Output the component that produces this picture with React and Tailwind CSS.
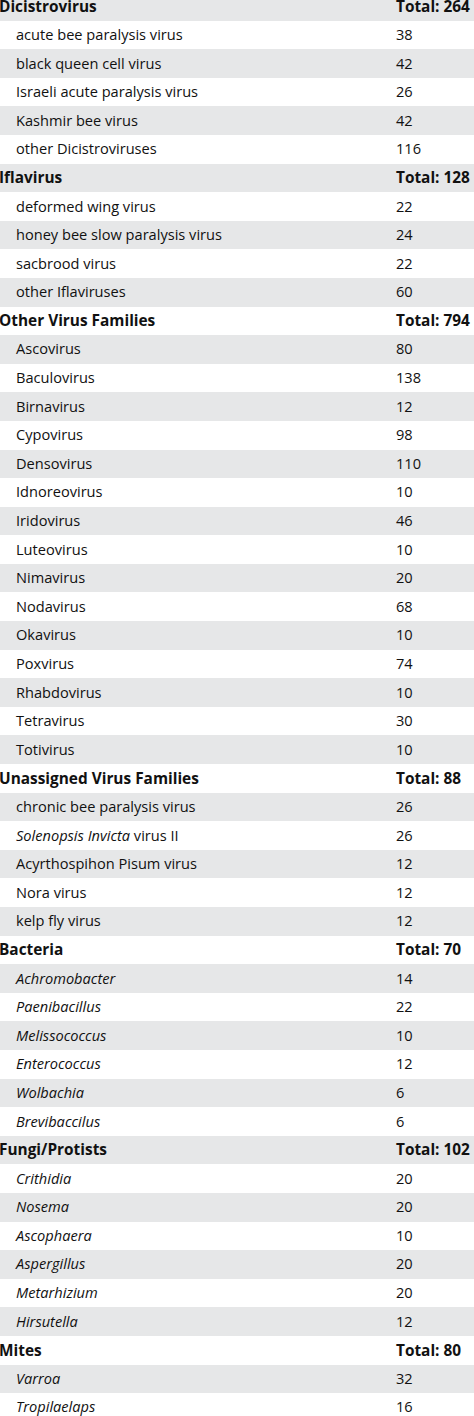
const groups = [
  {
    name: "Dicistrovirus",
    total: 264,
    items: [
      ["acute bee paralysis virus", 38],
      ["black queen cell virus", 42],
      ["Israeli acute paralysis virus", 26],
      ["Kashmir bee virus", 42],
      ["other Dicistroviruses", 116],
    ],
  },
  {
    name: "Iflavirus",
    total: 128,
    items: [
      ["deformed wing virus", 22],
      ["honey bee slow paralysis virus", 24],
      ["sacbrood virus", 22],
      ["other Iflaviruses", 60],
    ],
  },
  {
    name: "Other Virus Families",
    total: 794,
    items: [
      ["Ascovirus", 80],
      ["Baculovirus", 138],
      ["Birnavirus", 12],
      ["Cypovirus", 98],
      ["Densovirus", 110],
      ["Idnoreovirus", 10],
      ["Iridovirus", 46],
      ["Luteovirus", 10],
      ["Nimavirus", 20],
      ["Nodavirus", 68],
      ["Okavirus", 10],
      ["Poxvirus", 74],
      ["Rhabdovirus", 10],
      ["Tetravirus", 30],
      ["Totivirus", 10],
    ],
  },
  {
    name: "Unassigned Virus Families",
    total: 88,
    items: [
      ["chronic bee paralysis virus", 26],
      [
        <>
          <i>Solenopsis Invicta</i> virus II
        </>,
        26,
      ],
      ["Acyrthospihon Pisum virus", 12],
      ["Nora virus", 12],
      ["kelp fly virus", 12],
    ],
  },
  {
    name: "Bacteria",
    total: 70,
    italic: true,
    items: [
      ["Achromobacter", 14],
      ["Paenibacillus", 22],
      ["Melissococcus", 10],
      ["Enterococcus", 12],
      ["Wolbachia", 6],
      ["Brevibaccilus", 6],
    ],
  },
  {
    name: "Fungi/Protists",
    total: 102,
    italic: true,
    items: [
      ["Crithidia", 20],
      ["Nosema", 20],
      ["Ascophaera", 10],
      ["Aspergillus", 20],
      ["Metarhizium", 20],
      ["Hirsutella", 12],
    ],
  },
  {
    name: "Mites",
    total: 80,
    italic: true,
    items: [
      ["Varroa", 32],
      ["Tropilaelaps", 16],
    ],
  },
];

export default function App() {
  let rows = [];
  groups.forEach((g) => {
    rows.push({ header: true, label: g.name, value: `Total: ${g.total}` });
    g.items.forEach(([label, value]) => {
      rows.push({ header: false, label, value, italic: g.italic });
    });
  });

  return (
    <div
      className="w-[474px] h-[1416px] overflow-hidden bg-white text-[#111111] text-[14.6px]"
      style={{ fontFamily: '"Open Sans", "Noto Sans", sans-serif' }}
    >
      <div className="mt-[-8px] flex flex-col">
        {rows.map((row, i) => (
          <div
            key={i}
            className={
              "h-[28.6px] flex flex-row items-center shrink-0 " +
              (i % 2 === 0 ? "bg-[#e6e7e8]" : "bg-white")
            }
          >
            {row.header ? (
              <>
                <div className="flex-1 font-bold text-[15.4px] -ml-[1px]">
                  {row.label}
                </div>
                <div className="w-[78px] font-bold text-[15.4px] whitespace-nowrap">
                  {row.value}
                </div>
              </>
            ) : (
              <>
                <div className={"flex-1 pl-4 " + (row.italic ? "italic" : "")}>
                  {row.label}
                </div>
                <div className="w-[78px]">{row.value}</div>
              </>
            )}
          </div>
        ))}
      </div>
    </div>
  );
}
